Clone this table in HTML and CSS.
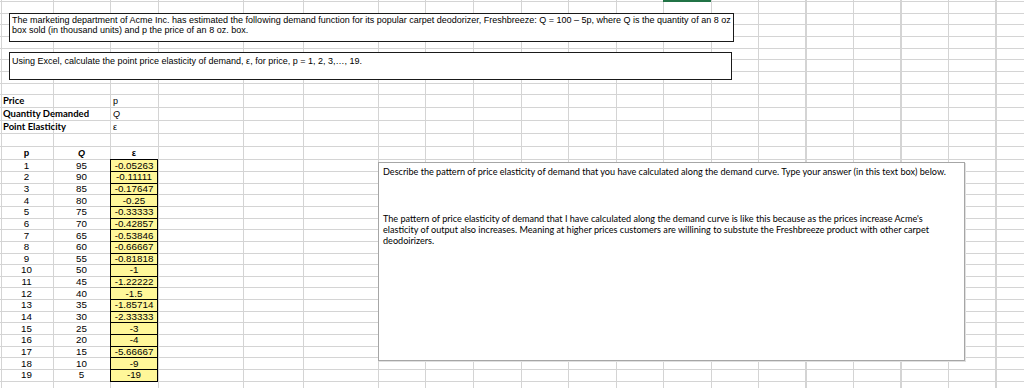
FILE: index.html
```html
<!DOCTYPE html>
<html lang="en">
<head>
<meta charset="utf-8">
<title>Freshbreeze elasticity</title>
<link rel="stylesheet" href="styles.css">
</head>
<body>
<div class="sheet">
  <div class="row edge"></div>
  <div class="row"></div>
  <div class="row"></div>
  <div class="row"></div>
  <div class="row"></div>
  <div class="row"></div>
  <div class="row"></div>
  <div class="row"></div>
  <div class="row"></div>

  <div class="row tall"><div class="cell lbl">Price</div><div class="cell"></div><div class="cell sym">p</div></div>
  <div class="row tall"><div class="cell lbl">Quantity Demanded</div><div class="cell"></div><div class="cell sym"><i>Q</i></div></div>
  <div class="row tall"><div class="cell lbl">Point Elasticity</div><div class="cell"></div><div class="cell sym">ε</div></div>
  <div class="row tall"></div>
  <div class="row tall"><div class="cell num hd">p</div><div class="cell num hd"><i>Q</i></div><div class="cell num hd">ε</div></div>

  <div class="row"><div class="cell num">1</div><div class="cell num">95</div><div class="cell eps first">-0.05263</div></div>
  <div class="row"><div class="cell num">2</div><div class="cell num">90</div><div class="cell eps">-0.11111</div></div>
  <div class="row"><div class="cell num">3</div><div class="cell num">85</div><div class="cell eps">-0.17647</div></div>
  <div class="row"><div class="cell num">4</div><div class="cell num">80</div><div class="cell eps">-0.25</div></div>
  <div class="row"><div class="cell num">5</div><div class="cell num">75</div><div class="cell eps">-0.33333</div></div>
  <div class="row"><div class="cell num">6</div><div class="cell num">70</div><div class="cell eps">-0.42857</div></div>
  <div class="row"><div class="cell num">7</div><div class="cell num">65</div><div class="cell eps">-0.53846</div></div>
  <div class="row"><div class="cell num">8</div><div class="cell num">60</div><div class="cell eps">-0.66667</div></div>
  <div class="row"><div class="cell num">9</div><div class="cell num">55</div><div class="cell eps">-0.81818</div></div>
  <div class="row"><div class="cell num">10</div><div class="cell num">50</div><div class="cell eps">-1</div></div>
  <div class="row"><div class="cell num">11</div><div class="cell num">45</div><div class="cell eps">-1.22222</div></div>
  <div class="row"><div class="cell num">12</div><div class="cell num">40</div><div class="cell eps">-1.5</div></div>
  <div class="row"><div class="cell num">13</div><div class="cell num">35</div><div class="cell eps">-1.85714</div></div>
  <div class="row"><div class="cell num">14</div><div class="cell num">30</div><div class="cell eps">-2.33333</div></div>
  <div class="row"><div class="cell num">15</div><div class="cell num">25</div><div class="cell eps">-3</div></div>
  <div class="row"><div class="cell num">16</div><div class="cell num">20</div><div class="cell eps">-4</div></div>
  <div class="row"><div class="cell num">17</div><div class="cell num">15</div><div class="cell eps">-5.66667</div></div>
  <div class="row"><div class="cell num">18</div><div class="cell num">10</div><div class="cell eps">-9</div></div>
  <div class="row"><div class="cell num">19</div><div class="cell num">5</div><div class="cell eps">-19</div></div>
  <div class="row"></div>

  <div class="selection"></div>

  <div class="box intro">The marketing department of Acme Inc. has estimated the following demand function for its popular carpet deodorizer, Freshbreeze: Q = 100 – 5p, where Q is the quantity of an 8 oz<br>box sold (in thousand units) and p the price of an 8 oz. box.</div>

  <div class="box task">Using Excel, calculate the point price elasticity of demand, ε, for price, p = 1, 2, 3,…, 19.</div>

  <div class="box answer">
    <p>Describe the pattern of price elasticity of demand that you have calculated along the demand curve. Type your answer (in this text box) below.</p>
    <p class="reply">The pattern of price elasticity of demand that I have calculated along the demand curve is like this because as the prices increase Acme's<br>elasticity of output also increases. Meaning at higher prices customers are willining to substute the Freshbreeze product with other carpet<br>deodoirizers.</p>
  </div>
</div>
</body>
</html>
```

FILE: styles.css
```css
* {
  box-sizing: border-box;
  margin: 0;
  padding: 0;
}

html,
body {
  width: 1024px;
  height: 388px;
  overflow: hidden;
  background: #fff;
}

body {
  font-family: "Liberation Sans", Arial, sans-serif;
  font-size: 9px;
  color: #000;
}

.sheet {
  position: relative;
  width: 1024px;
  height: 388px;
  overflow: hidden;
  display: flex;
  flex-direction: column;
  background-image:
    repeating-linear-gradient(to right, #d4d4d4 0 1px, transparent 1px 47.5px),
    linear-gradient(to right,
      transparent 1px, #d4d4d4 1px 2px,
      transparent 2px 53px, #d4d4d4 53px 54px,
      transparent 54px 110px, #d4d4d4 110px 111px,
      transparent 111px 158px, #d4d4d4 158px 159px,
      transparent 159px 243px, #d4d4d4 243px 244px,
      transparent 244px 303px, #d4d4d4 303px 304px,
      transparent 304px);
  background-repeat: no-repeat;
  background-position: 378px 0, 0 0;
  background-size: 646px 100%, 378px 100%;
}

.row {
  flex: none;
  height: 11.667px;
  border-bottom: 1px solid #d4d4d4;
  display: grid;
  grid-template-columns: 53px 57px 48px 1fr;
  align-items: center;
}

.row.edge {
  height: 2px;
}

.row.tall {
  height: 13px;
}

.cell {
  white-space: nowrap;
  line-height: 10px;
}

.lbl {
  padding-left: 3px;
  font-family: Lato, "Liberation Sans", sans-serif;
  font-weight: 700;
  font-size: 9.5px;
}

.sym {
  padding-left: 3px;
  font-size: 9px;
}

.num {
  text-align: center;
  font-size: 9.8px;
}

.hd {
  font-weight: 700;
  font-size: 9px;
}

.eps {
  align-self: stretch;
  display: flex;
  align-items: center;
  justify-content: center;
  background: #fff799;
  border-left: 1px solid #000;
  border-right: 1px solid #000;
  box-shadow: 0 1px 0 #000;
  font-size: 9.8px;
}

.eps.first {
  box-shadow: 0 1px 0 #000, 0 -1px 0 #000;
}

.selection {
  position: absolute;
  left: 663px;
  top: 0;
  width: 48px;
  height: 2px;
  background: #217346;
}

.box {
  position: absolute;
  background: #fff;
  border: 1px solid #1a1a1a;
  white-space: nowrap;
  font-size: 9px;
  line-height: 10px;
}

.intro {
  left: 9px;
  top: 13px;
  width: 725px;
  height: 29px;
  padding: 1px 2px;
}

.task {
  left: 9px;
  top: 52px;
  width: 723px;
  height: 28px;
  padding: 3px 2px;
}

.answer {
  left: 378px;
  top: 162px;
  width: 587px;
  height: 199px;
  border-color: #a6a6a6;
  box-shadow: 1px 1px 0 #e0e0e0;
  padding: 3px 4px;
  font-family: Lato, "Liberation Sans", sans-serif;
  font-size: 9.1px;
  line-height: 11px;
}

.answer .reply {
  margin-top: 36px;
}
```
